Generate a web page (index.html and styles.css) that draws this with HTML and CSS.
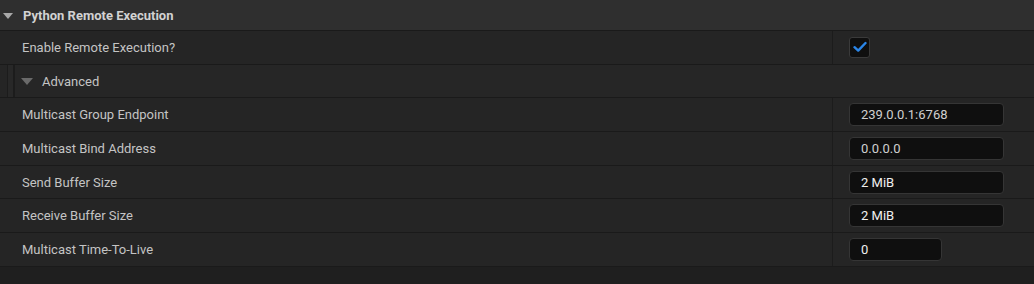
FILE: index.html
```html
<!DOCTYPE html>
<html>
<head>
<meta charset="utf-8">
<link rel="stylesheet" href="styles.css">
</head>
<body>
<div class="panel">
  <div class="section-header">
    <span class="tri tri-header"></span>
    <span class="section-title">Python Remote Execution</span>
  </div>
  <div class="row">
    <div class="name"><span class="label">Enable Remote Execution?</span></div>
    <div class="value">
      <span class="checkbox">
        <svg width="14" height="12" viewBox="0 0 14 12"><path d="M1.5 6.2 L5.2 9.6 L12.5 2" fill="none" stroke="#2b86e8" stroke-width="2.4" stroke-linecap="round" stroke-linejoin="round"/></svg>
      </span>
    </div>
  </div>
  <div class="row group-row">
    <div class="indent"><span class="indent-a"></span><span class="indent-b"></span></div>
    <span class="tri tri-group"></span>
    <span class="group-label">Advanced</span>
  </div>
  <div class="row">
    <div class="name"><span class="label">Multicast Group Endpoint</span></div>
    <div class="value"><span class="input dim">239.0.0.1:6768</span></div>
  </div>
  <div class="row">
    <div class="name"><span class="label">Multicast Bind Address</span></div>
    <div class="value"><span class="input dim">0.0.0.0</span></div>
  </div>
  <div class="row">
    <div class="name"><span class="label">Send Buffer Size</span></div>
    <div class="value"><span class="input">2 MiB</span></div>
  </div>
  <div class="row">
    <div class="name"><span class="label">Receive Buffer Size</span></div>
    <div class="value"><span class="input">2 MiB</span></div>
  </div>
  <div class="row">
    <div class="name"><span class="label">Multicast Time-To-Live</span></div>
    <div class="value"><span class="input short">0</span></div>
  </div>
</div>
</body>
</html>
```

FILE: styles.css
```css
html, body {
  margin: 0;
  padding: 0;
  background: #1f1f1f;
  font-family: Roboto, "Liberation Sans", sans-serif;
  font-size: 13px;
  color: #c4c4c4;
}
.panel {
  width: 1034px;
}
.section-header {
  height: 30px;
  background: #2f2f2f;
  border-bottom: 1px solid #1a1a1a;
  display: flex;
  align-items: center;
}
.tri {
  display: inline-block;
  width: 0;
  height: 0;
  border-left-style: solid;
  border-right-style: solid;
  border-top-style: solid;
  border-left-color: transparent;
  border-right-color: transparent;
}
.tri-header {
  margin-left: 3px;
  border-left-width: 5px;
  border-right-width: 5px;
  border-top-width: 6px;
  border-top-color: #a8a8a8;
  margin-top: 1px;
}
.section-title {
  margin-left: 10px;
  font-weight: bold;
  color: #d2d2d2;
}
.row {
  height: 32.7px;
  background: #252525;
  border-bottom: 1px solid #1a1a1a;
  display: flex;
  align-items: stretch;
}
.name {
  width: 832px;
  border-right: 1px solid #1c1c1c;
  display: flex;
  align-items: center;
}
.label {
  margin-left: 22px;
}
.value {
  flex: 1;
  display: flex;
  align-items: center;
  padding-left: 16px;
}
.checkbox {
  width: 19px;
  height: 19px;
  background: #0f0f0f;
  border: 1px solid #3a3a3a;
  border-radius: 3px;
  display: flex;
  align-items: center;
  justify-content: center;
}
.input {
  box-sizing: border-box;
  width: 155px;
  height: 23px;
  background: #0f0f0f;
  border: 1px solid #353535;
  border-radius: 4px;
  padding-left: 11px;
  display: flex;
  align-items: center;
  color: #f0f0f0;
  font-size: 13px;
}
.input.dim {
  color: #cfcfcf;
}
.input.short {
  width: 93px;
}
.group-row {
  background: #262626;
  align-items: center;
}
.indent {
  align-self: stretch;
  display: flex;
  width: 15px;
}
.indent-a {
  width: 7px;
  background: #252525;
  border-right: 1px solid #1c1c1c;
}
.indent-b {
  width: 5px;
  background: #282828;
  border-right: 2px solid #1c1c1c;
}
.tri-group {
  margin-left: 6px;
  border-left-width: 6px;
  border-right-width: 6px;
  border-top-width: 7px;
  border-top-color: #6a6a6a;
}
.group-label {
  margin-left: 9px;
  color: #c4c4c4;
}
```
